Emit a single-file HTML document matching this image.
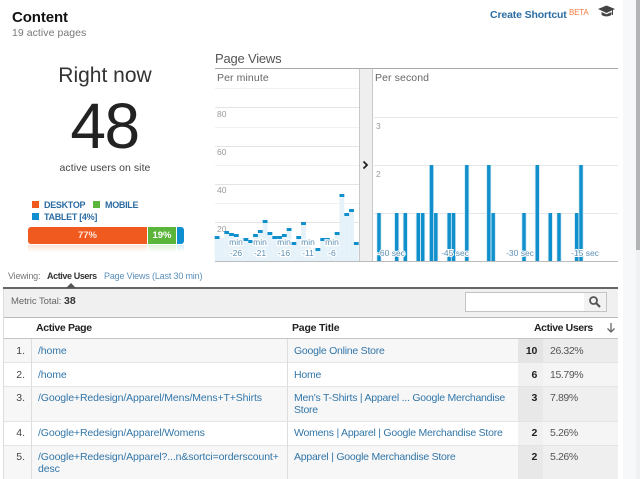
<!DOCTYPE html>
<html><head><meta charset="utf-8"><style>
html,body{margin:0;padding:0;background:#fff;width:640px;height:479px;overflow:hidden}
body{position:relative;font-family:"Liberation Sans",sans-serif;font-size:10.5px;color:#333}
.a{position:absolute;white-space:nowrap}
.b{position:absolute}
.c{position:absolute;font-size:10.5px;line-height:12px;color:#3276a8;letter-spacing:-.12px;white-space:nowrap}
.t{letter-spacing:-.24px}
.n{position:absolute;font-size:10.5px;line-height:12px;color:#444;width:22px;text-align:right;left:3px}
.v{position:absolute;font-size:10.5px;font-weight:bold;line-height:12px;color:#222;width:21px;text-align:right;left:516px;letter-spacing:-.3px}
.p{position:absolute;font-size:10.5px;line-height:12px;color:#555;left:550px;letter-spacing:-.4px}
</style></head><body>
<div class="b" style="left:623px;top:0;width:13px;height:479px;background:#f7f8fa"></div>
<div class="b" style="left:636px;top:0;width:4px;height:479px;background:#f1f1f1"></div>
<div class="b" style="left:636px;top:0;width:4px;height:250px;background:#b4b4b4"></div>

<div class="a" style="left:12px;top:9px;font-size:15px;font-weight:bold;color:#111;line-height:18px;letter-spacing:-.1px">Content</div>
<div class="a" style="left:12px;top:27px;font-size:10.5px;color:#777;line-height:13px;letter-spacing:.05px">19 active pages</div>
<div class="a" style="left:490px;top:9px;font-size:10.5px;font-weight:bold;color:#2b6ca3;line-height:13px;letter-spacing:-.14px">Create Shortcut</div>
<div class="a" style="left:569px;top:8px;font-size:8px;color:#ef7b3c;line-height:10px;letter-spacing:-.2px">BETA</div>
<svg class="b" style="left:597px;top:4px" width="20" height="15" viewBox="0 0 20 15"><path d="M1 5L9.500 1.500L18 5L9.500 9Z" fill="#444"/><path d="M4.500 8L4.500 10.500C6 13 13 13 14.500 10.500L14.500 8L9.500 10.300Z" fill="#444"/><path d="M15.500 6L15.500 11" stroke="#444" stroke-width="1"/></svg>

<div class="a" style="left:0;width:210px;text-align:center;top:62px;font-size:21px;line-height:27px;color:#333">Right now</div>
<div class="a" style="left:0;width:209px;text-align:center;top:86px;font-size:64px;line-height:80px;color:#222;letter-spacing:-1.500px">48</div>
<div class="a" style="left:0;width:210px;text-align:center;top:162px;font-size:10.5px;line-height:13px;color:#444;letter-spacing:.05px">active users on site</div>

<div class="b" style="left:32px;top:201px;width:7px;height:7px;background:#f05a1e"></div>
<div class="a" style="left:44px;top:199px;font-size:9px;font-weight:bold;color:#2b6ca3;line-height:12px;letter-spacing:-.3px">DESKTOP</div>
<div class="b" style="left:93px;top:201px;width:7px;height:7px;background:#5bb53a"></div>
<div class="a" style="left:105px;top:199px;font-size:9px;font-weight:bold;color:#2b6ca3;line-height:12px;letter-spacing:-.3px">MOBILE</div>
<div class="b" style="left:32px;top:213px;width:7px;height:7px;background:#0f8fd0"></div>
<div class="a" style="left:44px;top:211px;font-size:9px;font-weight:bold;color:#2b6ca3;line-height:12px;letter-spacing:-.3px">TABLET [4%]</div>
<div class="b" style="left:28px;top:227px;width:119px;height:17px;background:#f05a1e;border-radius:3px 0 0 3px"></div>
<div class="b" style="left:148px;top:227px;width:28px;height:17px;background:#5bb53a"></div>
<div class="b" style="left:177px;top:227px;width:7px;height:17px;background:#0f8fd0;border-radius:0 3px 3px 0"></div>
<div class="b" style="left:28px;top:245px;width:119px;height:7px;background:linear-gradient(#fde0d4,#fff)"></div>
<div class="b" style="left:148px;top:245px;width:28px;height:7px;background:linear-gradient(#e0f2d9,#fff)"></div>
<div class="b" style="left:177px;top:245px;width:7px;height:7px;background:linear-gradient(#d5ecf8,#fff)"></div>
<div class="a" style="left:28px;width:119px;text-align:center;top:230px;font-size:9.5px;font-weight:bold;color:#fde8df;line-height:12px">77%</div>
<div class="a" style="left:148px;width:28px;text-align:center;top:230px;font-size:9.5px;font-weight:bold;color:#fff;line-height:12px">19%</div>

<div class="a" style="left:215px;top:51px;font-size:13px;color:#555;line-height:16px;letter-spacing:-.2px">Page Views</div>
<svg class="b" style="left:0;top:0" width="640" height="290" font-family="Liberation Sans, sans-serif">
<rect x="215" y="68" width="403" height="1" fill="#aaa"/>
<g fill="#f1f1f1"><rect x="215" y="88" width="144" height="1"/><rect x="215" y="127" width="144" height="1"/><rect x="215" y="165" width="144" height="1"/><rect x="215" y="203" width="144" height="1"/></g>
<g fill="#e4e4e4"><rect x="215" y="107" width="144" height="1"/><rect x="215" y="146" width="144" height="1"/><rect x="215" y="184" width="144" height="1"/><rect x="215" y="222" width="144" height="1"/></g>
<g fill="#e6e6e6"><rect x="374" y="117" width="244" height="1"/><rect x="374" y="165" width="244" height="1"/><rect x="374" y="213" width="244" height="1"/></g>
<g font-size="8.500" fill="#999"><text x="217" y="117">80</text><text x="217" y="155">60</text><text x="217" y="193">40</text><text x="217" y="232">20</text><text x="376" y="129">3</text><text x="376" y="177">2</text><text x="376" y="225">1</text></g>
<rect x="359" y="69" width="14" height="192" fill="#efefef"/><rect x="359" y="69" width="1" height="192" fill="#c8c8c8"/><rect x="372" y="69" width="1" height="192" fill="#c8c8c8"/>
<path d="M363.500 161.500L367 165L363.500 168.500" fill="none" stroke="#222" stroke-width="1.800"/>
<g fill="#e5f2f9">
<rect x="214.700" y="238" width="4.800" height="23"/><rect x="219.500" y="238" width="4.800" height="23"/><rect x="224.300" y="232" width="4.800" height="29"/><rect x="229.100" y="234" width="4.800" height="27"/><rect x="233.900" y="236" width="4.800" height="25"/><rect x="238.700" y="238" width="4.800" height="23"/><rect x="243.500" y="239" width="4.800" height="22"/><rect x="248.300" y="241" width="4.800" height="20"/><rect x="253.100" y="235" width="4.800" height="26"/><rect x="257.900" y="231" width="4.800" height="30"/><rect x="262.700" y="221" width="4.800" height="40"/><rect x="267.500" y="233" width="4.800" height="28"/><rect x="272.300" y="236" width="4.800" height="25"/><rect x="277.100" y="236" width="4.800" height="25"/><rect x="281.900" y="234" width="4.800" height="27"/><rect x="286.700" y="229" width="4.800" height="32"/><rect x="291.500" y="242" width="4.800" height="19"/><rect x="296.300" y="236" width="4.800" height="25"/><rect x="301.100" y="223" width="4.800" height="38"/><rect x="305.900" y="239" width="4.800" height="22"/><rect x="310.700" y="248" width="4.800" height="13"/><rect x="315.500" y="248" width="4.800" height="13"/><rect x="320.300" y="238" width="4.800" height="23"/><rect x="325.100" y="238" width="4.800" height="23"/><rect x="329.900" y="240" width="4.800" height="21"/><rect x="334.700" y="233" width="4.800" height="28"/><rect x="339.500" y="194" width="4.800" height="67"/><rect x="344.300" y="213" width="4.800" height="48"/><rect x="349.100" y="209" width="4.800" height="52"/><rect x="353.900" y="242" width="4.800" height="19"/>
</g>
<g fill="#0f8fcb">
<rect x="214.700" y="236" width="4.800" height="3"/><rect x="224.300" y="231" width="4.800" height="3"/><rect x="229.100" y="233" width="4.800" height="3"/><rect x="233.900" y="234" width="4.800" height="3"/><rect x="243.500" y="238" width="4.800" height="3"/><rect x="248.300" y="240" width="4.800" height="3"/><rect x="253.100" y="234" width="4.800" height="3"/><rect x="257.900" y="230" width="4.800" height="3"/><rect x="262.700" y="220" width="4.800" height="3"/><rect x="267.500" y="232" width="4.800" height="3"/><rect x="272.300" y="236" width="4.800" height="3"/><rect x="277.100" y="236" width="4.800" height="3"/><rect x="281.900" y="234" width="4.800" height="3"/><rect x="286.700" y="228" width="4.800" height="3"/><rect x="291.500" y="242" width="4.800" height="3"/><rect x="296.300" y="236" width="4.800" height="3"/><rect x="301.100" y="222" width="4.800" height="3"/><rect x="315.500" y="248" width="4.800" height="3"/><rect x="320.300" y="238" width="4.800" height="3"/><rect x="325.100" y="238" width="4.800" height="3"/><rect x="334.700" y="232" width="4.800" height="3"/><rect x="339.500" y="194" width="4.800" height="3"/><rect x="344.300" y="213" width="4.800" height="3"/><rect x="349.100" y="209" width="4.800" height="3"/><rect x="353.900" y="242" width="4.800" height="3"/>
</g>
<g font-size="8.500" fill="#5d8fb3" stroke="#fff" stroke-width="2.500" paint-order="stroke" text-anchor="middle">
<text x="236" y="245">min</text><text x="236" y="256">-26</text><text x="260" y="245">min</text><text x="260" y="256">-21</text><text x="284" y="245">min</text><text x="284" y="256">-16</text><text x="308" y="245">min</text><text x="308" y="256">-11</text><text x="332" y="245">min</text><text x="332" y="256">-6</text>
</g>
<g fill="#cfe6f3">
<rect x="376.500" y="213" width="5" height="48"/><rect x="394.200" y="213" width="5" height="48"/><rect x="402.800" y="213" width="5" height="48"/><rect x="415.800" y="213" width="5" height="48"/><rect x="420.200" y="213" width="5" height="48"/><rect x="429" y="165" width="5" height="96"/><rect x="433.300" y="213" width="5" height="48"/><rect x="446.700" y="213" width="5" height="48"/><rect x="451" y="213" width="5" height="48"/><rect x="464.300" y="165" width="5" height="96"/><rect x="486.300" y="165" width="5" height="96"/><rect x="490.700" y="213" width="5" height="48"/><rect x="521.500" y="213" width="5" height="48"/><rect x="534.800" y="165" width="5" height="96"/><rect x="547.800" y="213" width="5" height="48"/><rect x="556.500" y="213" width="5" height="48"/><rect x="574.200" y="213" width="5" height="48"/><rect x="578.500" y="165" width="5" height="96"/>
</g>
<g fill="#0f8fcb">
<rect x="377.300" y="213" width="3.400" height="48"/><rect x="395" y="213" width="3.400" height="48"/><rect x="403.600" y="213" width="3.400" height="48"/><rect x="416.600" y="213" width="3.400" height="48"/><rect x="421" y="213" width="3.400" height="48"/><rect x="429.800" y="165" width="3.400" height="96"/><rect x="434.100" y="213" width="3.400" height="48"/><rect x="447.500" y="213" width="3.400" height="48"/><rect x="451.800" y="213" width="3.400" height="48"/><rect x="465.100" y="165" width="3.400" height="96"/><rect x="487.100" y="165" width="3.400" height="96"/><rect x="491.500" y="213" width="3.400" height="48"/><rect x="522.300" y="213" width="3.400" height="48"/><rect x="535.600" y="165" width="3.400" height="96"/><rect x="548.600" y="213" width="3.400" height="48"/><rect x="557.300" y="213" width="3.400" height="48"/><rect x="575" y="213" width="3.400" height="48"/><rect x="579.300" y="165" width="3.400" height="96"/>
</g>
<g font-size="8.500" fill="#5d8fb3" stroke="#fff" stroke-width="2" paint-order="stroke" text-anchor="middle"><text x="391" y="256">-60 sec</text><text x="455" y="256">-45 sec</text><text x="520" y="256">-30 sec</text><text x="585" y="256">-15 sec</text></g>
<rect x="215" y="261" width="403" height="1" fill="#bbb"/>
</svg>
<div class="a" style="left:217px;top:72px;font-size:10.5px;color:#666;line-height:13px;letter-spacing:.1px">Per minute</div>
<div class="a" style="left:375px;top:72px;font-size:10.5px;color:#666;line-height:13px;letter-spacing:.1px">Per second</div>

<div class="a" style="left:8px;top:270px;font-size:9px;color:#777;line-height:12px;letter-spacing:-.2px">Viewing:</div>
<div class="a" style="left:47px;top:270px;font-size:9px;font-weight:bold;color:#333;line-height:12px;letter-spacing:-.4px">Active Users</div>
<div class="a" style="left:104px;top:270px;font-size:9px;color:#5a8fba;line-height:12px;letter-spacing:-.17px">Page Views (Last 30 min)</div>
<div class="b" style="left:3px;top:287px;width:615px;height:2px;background:#666"></div>
<svg class="b" style="left:64px;top:283px" width="14" height="5"><path d="M2 5L7 0L12 5Z" fill="#555"/></svg>

<div class="b" style="left:3px;top:289px;width:615px;height:28px;background:#f0f0f0;border-bottom:1px solid #bbb"></div>
<div class="a" style="left:11px;top:296px;font-size:9.500px;color:#666;line-height:12px;letter-spacing:-.05px">Metric Total:</div>
<div class="a" style="left:64px;top:295px;font-size:10.500px;font-weight:bold;color:#333;line-height:13px">38</div>
<div class="b" style="left:465px;top:292px;width:118px;height:18px;background:#fff;border:1px solid #c4c4c4"></div>
<div class="b" style="left:584px;top:292px;width:22px;height:18px;background:#f2f2f2;border:1px solid #c4c4c4;border-left:0"></div>
<svg class="b" style="left:588px;top:295px" width="14" height="14"><circle cx="5.500" cy="5.500" r="3.500" fill="none" stroke="#555" stroke-width="1.800"/><path d="M8 8L12 12" stroke="#555" stroke-width="2.200"/></svg>

<div class="a" style="left:36px;top:322px;font-size:10.500px;font-weight:bold;color:#222;line-height:13px;letter-spacing:-.35px">Active Page</div>
<div class="a" style="left:292px;top:322px;font-size:10.500px;font-weight:bold;color:#222;line-height:13px;letter-spacing:-.2px">Page Title</div>
<div class="a" style="left:534px;top:322px;font-size:10.500px;font-weight:bold;color:#222;line-height:13px;letter-spacing:-.4px">Active Users</div>
<svg class="b" style="left:605px;top:322px" width="12" height="12"><path d="M6 1L6 10M2.500 6.500L6 10L9.500 6.500" fill="none" stroke="#666" stroke-width="1.300"/></svg>
<div class="b" style="left:3px;top:338px;width:615px;height:1px;background:#c4c4c4"></div>

<div class="b" style="left:3px;top:339px;width:515px;height:23px;background:#f7f7f7"></div>
<div class="b" style="left:3px;top:387px;width:515px;height:34px;background:#f7f7f7"></div>
<div class="b" style="left:3px;top:446px;width:515px;height:33px;background:#f7f7f7"></div>
<div class="b" style="left:518px;top:339px;width:25px;height:140px;background:#f1f1f1"></div>
<div class="b" style="left:543px;top:339px;width:75px;height:140px;background:#f5f5f5"></div>
<div class="b" style="left:518px;top:339px;width:25px;height:23px;background:#e4e4e4"></div>
<div class="b" style="left:543px;top:339px;width:75px;height:23px;background:#ececec"></div>
<div class="b" style="left:518px;top:387px;width:25px;height:34px;background:#e8e8e8"></div>
<div class="b" style="left:543px;top:387px;width:75px;height:34px;background:#efefef"></div>
<div class="b" style="left:518px;top:446px;width:25px;height:33px;background:#e8e8e8"></div>
<div class="b" style="left:543px;top:446px;width:75px;height:33px;background:#efefef"></div>
<div class="b" style="left:3px;top:362px;width:615px;height:1px;background:#e4e4e4"></div>
<div class="b" style="left:3px;top:386px;width:615px;height:1px;background:#e4e4e4"></div>
<div class="b" style="left:3px;top:421px;width:615px;height:1px;background:#e4e4e4"></div>
<div class="b" style="left:3px;top:445px;width:615px;height:1px;background:#e4e4e4"></div>
<div class="b" style="left:3px;top:289px;width:1px;height:190px;background:#ddd"></div>
<div class="b" style="left:31px;top:339px;width:1px;height:140px;background:#ddd"></div>
<div class="b" style="left:287px;top:339px;width:1px;height:140px;background:#ddd"></div>

<div class="n" style="top:345px">1.</div><div class="c" style="left:38px;top:345px">/home</div><div class="c t" style="left:294px;top:345px">Google Online Store</div><div class="v" style="top:345px">10</div><div class="p" style="top:345px">26.32%</div>
<div class="n" style="top:369px">2.</div><div class="c" style="left:38px;top:369px">/home</div><div class="c t" style="left:294px;top:369px">Home</div><div class="v" style="top:369px">6</div><div class="p" style="top:369px">15.79%</div>
<div class="n" style="top:392px">3.</div><div class="c" style="left:38px;top:392px">/Google+Redesign/Apparel/Mens/Mens+T+Shirts</div><div class="c t" style="left:294px;top:392px">Men's T-Shirts | Apparel ... Google Merchandise<br>Store</div><div class="v" style="top:392px">3</div><div class="p" style="top:392px">7.89%</div>
<div class="n" style="top:427px">4.</div><div class="c" style="left:38px;top:427px">/Google+Redesign/Apparel/Womens</div><div class="c t" style="left:294px;top:427px">Womens | Apparel | Google Merchandise Store</div><div class="v" style="top:427px">2</div><div class="p" style="top:427px">5.26%</div>
<div class="n" style="top:451px">5.</div><div class="c" style="left:38px;top:451px">/Google+Redesign/Apparel?...n&amp;sortci=orderscount+<br>desc</div><div class="c t" style="left:294px;top:451px">Apparel | Google Merchandise Store</div><div class="v" style="top:451px">2</div><div class="p" style="top:451px">5.26%</div>
</body></html>
